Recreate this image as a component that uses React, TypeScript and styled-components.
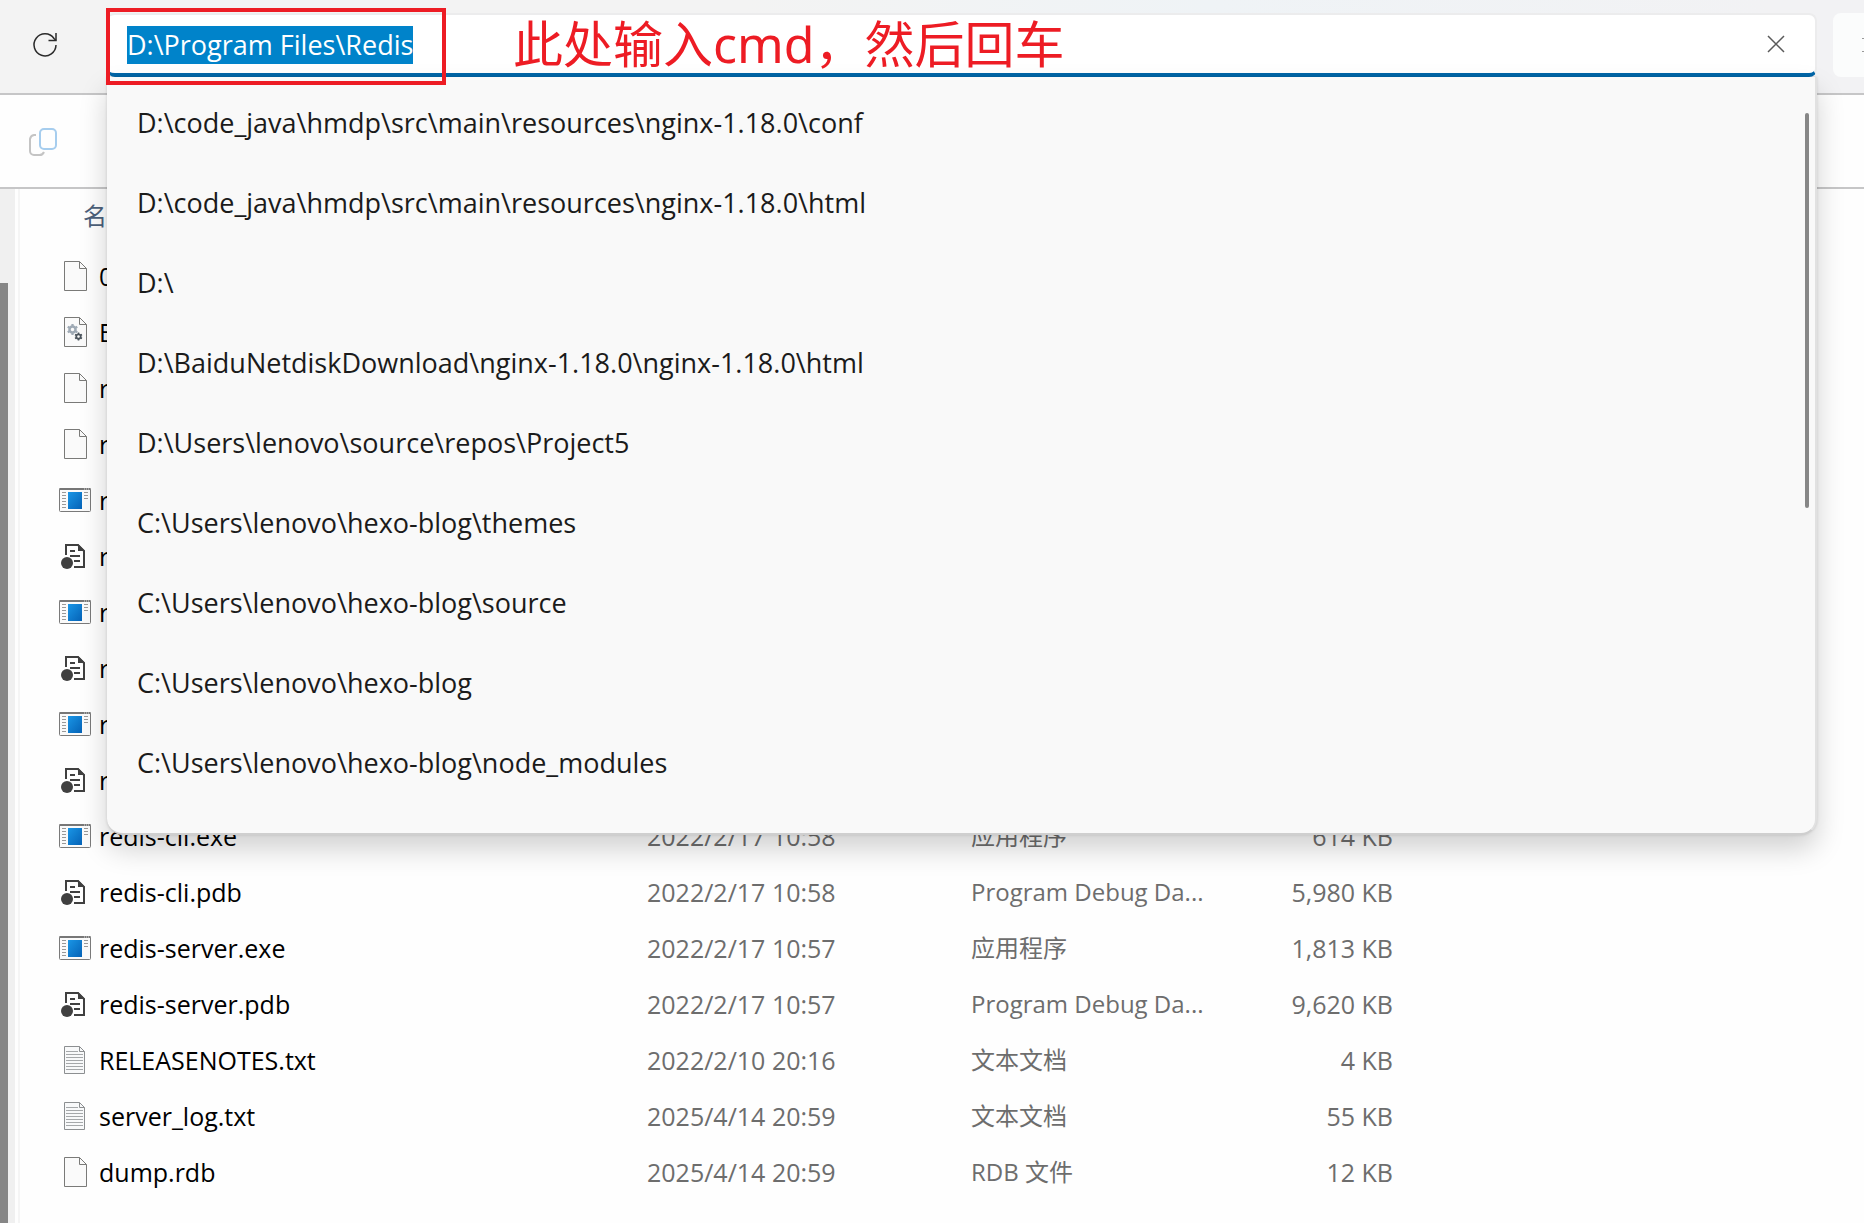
import React, { useEffect, useRef } from "react";
import styled, { createGlobalStyle } from "styled-components";

const LATIN = `"Open Sans", "Noto Sans CJK SC", sans-serif`;

const GlobalStyle = createGlobalStyle`
  *, *::before, *::after { box-sizing: border-box; }
  body { margin: 0; background: #fefefe; font-family: ${LATIN}; }
  button, input { font: inherit; }
`;

const Window = styled.div`
  min-height: 100vh;
  display: flex;
  flex-direction: column;
  overflow: hidden;
`;

const Header = styled.header`
  display: flex;
  align-items: flex-start;
  height: 95px;
  padding-top: 13px;
  border-bottom: 2px solid #c6c6c7;
  background: linear-gradient(90deg, #f3f3f3 0%, #f3f3f3 40%, #eff3f6 65%, #f2f2f4 95%);
`;

const IconButton = styled.button`
  display: flex;
  align-items: center;
  justify-content: center;
  padding: 0;
  border: 0;
  background: none;
  width: ${(p: { $width: number }) => p.$width}px;
  height: 64px;
`;

const NavArea = styled.div`
  width: 107px;
  flex: none;
  padding-left: 13px;
`;

const AddressBar = styled.div`
  position: relative;
  z-index: 2;
  flex: 1;
`;

const AddressField = styled.div`
  display: flex;
  align-items: center;
  height: 64px;
  padding: 0 7px 0 20px;
  border-top: 2px solid #ececed;
  border-right: 2px solid #ececed;
  border-bottom: 4px solid #0066a8;
  border-radius: 8px;
  background: #ffffff;
`;

const AddressInput = styled.input`
  flex: 1;
  min-width: 0;
  padding: 1px 0 0;
  border: 0;
  outline: 0;
  background: none;
  color: #1b1b1b;
  font-size: 27px;
  line-height: 38px;
  &::selection { background: #0083ca; color: #ffffff; }
`;

const Suggestions = styled.div`
  position: absolute;
  top: 64px;
  left: 0;
  right: 0;
  display: flex;
  padding: 6px 6px 30px 0;
  border-right: 2px solid #e1e1e1;
  border-bottom: 2px solid #cfcfcf;
  border-radius: 0 0 16px 16px;
  background: #f9f9f9;
  box-shadow: 0 14px 28px rgba(0, 0, 0, 0.18), 0 0 3px rgba(0, 0, 0, 0.14);
`;

const SuggestionList = styled.ul`
  flex: 1;
  margin: 0;
  padding: 0;
  list-style: none;
`;

const Suggestion = styled.li`
  display: flex;
  align-items: center;
  height: 80px;
  padding-left: 30px;
  color: #1b1b1b;
  font-size: 27px;
  line-height: 40px;
  white-space: nowrap;
`;

const PanelThumb = styled.div`
  width: 4px;
  height: 395px;
  margin-top: 30px;
  border-radius: 2px;
  background: #878787;
`;

const Search = styled.button`
  width: 31px;
  height: 64px;
  margin-left: 16px;
  padding: 0;
  border: 0;
  border-radius: 8px 0 0 8px;
  background: #fbfcfc;
  display: flex;
  align-items: center;
  justify-content: flex-end;
`;

const Callout = styled.div`
  position: absolute;
  z-index: 3;
  top: -5px;
  left: -1px;
  width: 340px;
  height: 77px;
  border: 4px solid #ed1c24;
  pointer-events: none;
`;

const Note = styled.p`
  position: absolute;
  z-index: 3;
  top: -5px;
  left: 406px;
  margin: 0;
  color: #ed1c24;
  font-family: "Noto Sans", "Noto Sans CJK SC", sans-serif;
  font-size: 50px;
  line-height: 72px;
  white-space: nowrap;
  pointer-events: none;
`;

const Toolbar = styled.div`
  display: flex;
  align-items: center;
  height: 94px;
  padding: 4px 0 0 27px;
  border-bottom: 2px solid #c6c6c7;
  background: #fefefe;
`;

const Body = styled.main`
  display: flex;
  flex: 1;
`;

const Gutter = styled.div`
  width: 15px;
  flex: none;
  padding-top: 94px;
  display: flex;
  background: #f0f0f0;
`;

const GutterThumb = styled.div`
  width: 8px;
  background: #868686;
`;

const Files = styled.div`
  flex: 1;
  margin-left: 3px;
  border-left: 2px solid #f5f5f5;
  padding-left: 39px;
`;

const Table = styled.table`
  width: 1334px;
  table-layout: fixed;
  border-collapse: collapse;
  font-size: 25px;
  line-height: 36px;
`;

const HeadCell = styled.th`
  height: 59px;
  padding: 0 0 5px 24px;
  color: #4c607a;
  font-size: 24px;
  font-weight: 400;
  text-align: left;
`;

const Cell = styled.td`
  height: 56px;
  padding: 0;
  color: #6d6d6d;
  white-space: nowrap;
  text-align: ${(p: { $end?: boolean }) => (p.$end ? "right" : "left")};
`;

const TypeCell = styled(Cell)`
  font-size: 24px;
`;

const FileName = styled.span`
  display: flex;
  align-items: center;
  gap: 7px;
  color: #000000;
`;

const Col = styled.col`
  width: ${(p: { $width: number }) => p.$width}px;
`;

type Kind = "blank" | "gears" | "app" | "pdb" | "text";

const Gear = ({ x, y, r, color }: { x: number; y: number; r: number; color: string }) => (
  <g transform={`translate(${x} ${y})`} stroke={color} fill="none">
    <circle r={r * 0.55} strokeWidth={r * 0.45} />
    {[0, 60, 120].map((a) => (
      <g key={a} transform={`rotate(${a})`} strokeWidth={r * 0.4}>
        <path d={`M0 ${-r}V${-r * 0.6}M0 ${r * 0.6}V${r}`} />
      </g>
    ))}
  </g>
);

const FileIcon = ({ kind }: { kind: Kind }) => (
  <svg width="33" height="32" viewBox="0 0 33 32" fill="none" aria-hidden="true">
    {(kind === "blank" || kind === "gears") && (
      <>
        <path d="M5.500 1.500H20.500L27.500 8.500V30.500H5.500Z" fill="#fafafa" stroke="#7a7a78" />
        <path d="M20.500 1.500V8.500H27.500" stroke="#7a7a78" />
      </>
    )}
    {kind === "gears" && (
      <>
        <Gear x={13.500} y={13.500} r={5.500} color="#9faab5" />
        <Gear x={19.500} y={20.500} r={4} color="#4d565e" />
      </>
    )}
    {kind === "app" && (
      <>
        <defs>
          <linearGradient id="appFill" x1="0" y1="0" x2="1" y2="1">
            <stop offset="0" stopColor="#1a96e6" />
            <stop offset="1" stopColor="#0562b6" />
          </linearGradient>
        </defs>
        <rect x="0.500" y="4.500" width="31" height="23" rx="1" fill="#fafafa" stroke="#7a7a7a" />
        <path d="M0.500 5H31.500" stroke="#777" strokeWidth="2" />
        <path d="M25 5H30" stroke="#ddd" strokeDasharray="1 1" />
        <rect x="9" y="8" width="14" height="17" fill="url(#appFill)" />
        <path d="M3 8.500H7M3 11.500H7M3 14.500H7M3 17.500H7M3 20.500H7M3 23.500H7M25 8.500H29M25 11.500H29M25 14.500H29" stroke="#999" />
      </>
    )}
    {kind === "pdb" && (
      <>
        <path d="M7 15V5H19L25 11V27H15" stroke="#404040" strokeWidth="2" />
        <path d="M19 4V11H26Z" fill="#404040" />
        <path d="M11 11H16M11 16H21M15 21H21" stroke="#404040" strokeWidth="2" />
        <circle cx="8" cy="23" r="6" fill="#404040" />
      </>
    )}
    {kind === "text" && (
      <>
        <path d="M5.500 2.500H20.500L25.500 7.500V29.500H5.500Z" fill="#f8f9fa" stroke="#8c8f91" />
        <path d="M20.500 2.500V7.500H25.500" stroke="#8c8f91" />
        <path d="M7 7.500H19M7 10.500H24M7 13.500H24M7 16.500H24M7 19.500H24M7 22.500H24M7 25.500H24" stroke="#a5a8aa" />
      </>
    )}
  </svg>
);

const paths = [
  "D:\\code_java\\hmdp\\src\\main\\resources\\nginx-1.18.0\\conf",
  "D:\\code_java\\hmdp\\src\\main\\resources\\nginx-1.18.0\\html",
  "D:\\",
  "D:\\BaiduNetdiskDownload\\nginx-1.18.0\\nginx-1.18.0\\html",
  "D:\\Users\\lenovo\\source\\repos\\Project5",
  "C:\\Users\\lenovo\\hexo-blog\\themes",
  "C:\\Users\\lenovo\\hexo-blog\\source",
  "C:\\Users\\lenovo\\hexo-blog",
  "C:\\Users\\lenovo\\hexo-blog\\node_modules",
];

const files: { kind: Kind; name: string; date?: string; type?: string; size?: string }[] = [
  { kind: "blank", name: "0" },
  { kind: "gears", name: "E" },
  { kind: "blank", name: "r" },
  { kind: "blank", name: "r" },
  { kind: "app", name: "r" },
  { kind: "pdb", name: "r" },
  { kind: "app", name: "r" },
  { kind: "pdb", name: "r" },
  { kind: "app", name: "r" },
  { kind: "pdb", name: "r" },
  { kind: "app", name: "redis-cli.exe", date: "2022/2/17 10:58", type: "应用程序", size: "614 KB" },
  { kind: "pdb", name: "redis-cli.pdb", date: "2022/2/17 10:58", type: "Program Debug Da...", size: "5,980 KB" },
  { kind: "app", name: "redis-server.exe", date: "2022/2/17 10:57", type: "应用程序", size: "1,813 KB" },
  { kind: "pdb", name: "redis-server.pdb", date: "2022/2/17 10:57", type: "Program Debug Da...", size: "9,620 KB" },
  { kind: "text", name: "RELEASENOTES.txt", date: "2022/2/10 20:16", type: "文本文档", size: "4 KB" },
  { kind: "text", name: "server_log.txt", date: "2025/4/14 20:59", type: "文本文档", size: "55 KB" },
  { kind: "blank", name: "dump.rdb", date: "2025/4/14 20:59", type: "RDB 文件", size: "12 KB" },
];

export default function App() {
  const input = useRef<HTMLInputElement>(null);
  useEffect(() => {
    input.current?.focus();
    input.current?.select();
  }, []);

  return (
    <Window>
      <GlobalStyle />
      <Header>
        <NavArea>
          <IconButton $width={64} aria-label="刷新">
            <svg width="26" height="26" viewBox="0 0 26 26" fill="none" stroke="#2a2a2a" strokeWidth="1.500">
              <path d="M24 13A11 11 0 1 1 22 6.500L24 8.500" />
              <path d="M24 1V8.500H16.500" />
            </svg>
          </IconButton>
        </NavArea>
        <AddressBar>
          <AddressField>
            <AddressInput ref={input} aria-label="地址" defaultValue={"D:\\Program Files\\Redis"} spellCheck={false} />
            <IconButton $width={64} aria-label="清除">
              <svg width="18" height="18" viewBox="0 0 18 18" stroke="#5a5a5a" strokeWidth="1.500">
                <path d="M1 1L17 17M17 1L1 17" />
              </svg>
            </IconButton>
          </AddressField>
          <Suggestions>
            <SuggestionList>
              {paths.map((p) => (
                <Suggestion key={p}>{p}</Suggestion>
              ))}
            </SuggestionList>
            <PanelThumb />
          </Suggestions>
          <Callout />
          <Note>此处输入cmd，然后回车</Note>
        </AddressBar>
        <Search aria-label="搜索">
          <svg width="2" height="16" viewBox="0 0 2 16" stroke="#999">
            <path d="M0 1.500H2M0 14.500H2" />
          </svg>
        </Search>
      </Header>
      <Toolbar>
        <IconButton $width={32} aria-label="复制">
          <svg width="32" height="32" viewBox="0 0 32 32" fill="none" strokeWidth="2">
            <rect x="13" y="2" width="16" height="20" rx="4" stroke="#a6cdee" />
            <path d="M10 8H8A5 5 0 0 0 4 12V24A4 4 0 0 0 8 28H13A5 5 0 0 0 18 25" transform="translate(-1 0)" stroke="#c4c4c4" />
          </svg>
        </IconButton>
      </Toolbar>
      <Body>
        <Gutter>
          <GutterThumb />
        </Gutter>
        <Files>
          <Table>
            <colgroup>
              <Col $width={588} />
              <Col $width={324} />
              <Col $width={260} />
              <Col $width={162} />
            </colgroup>
            <thead>
              <tr>
                <HeadCell colSpan={4}>名</HeadCell>
              </tr>
            </thead>
            <tbody>
              {files.map((f, i) => (
                <tr key={i}>
                  <Cell>
                    <FileName>
                      <FileIcon kind={f.kind} />
                      {f.name}
                    </FileName>
                  </Cell>
                  <Cell>{f.date}</Cell>
                  <TypeCell>{f.type}</TypeCell>
                  <Cell $end>{f.size}</Cell>
                </tr>
              ))}
            </tbody>
          </Table>
        </Files>
      </Body>
    </Window>
  );
}
